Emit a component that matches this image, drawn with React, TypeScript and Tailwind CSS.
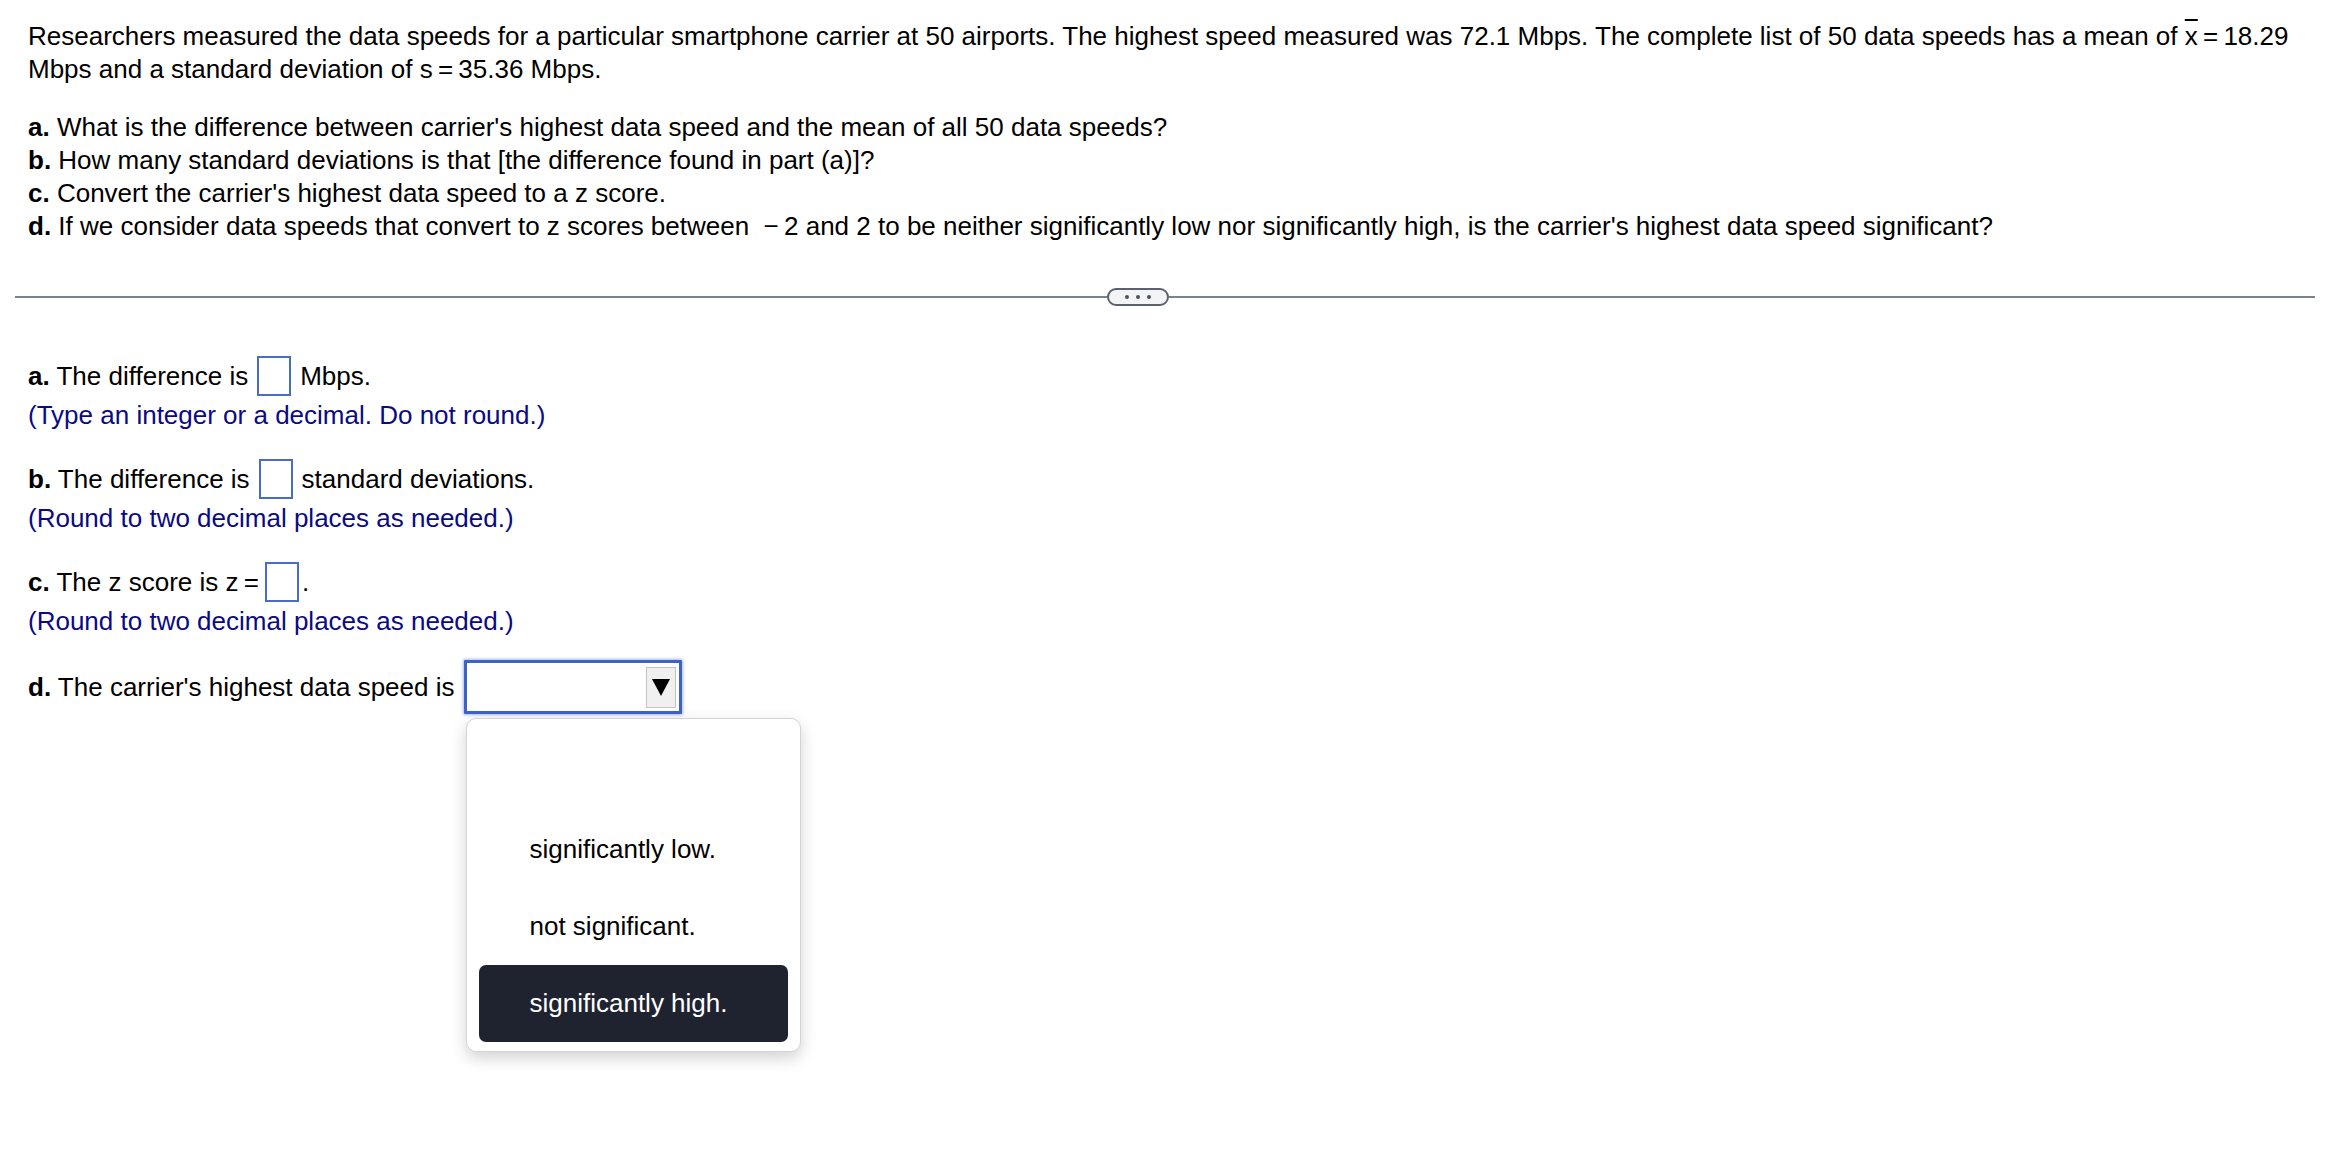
import { useState } from "react";

const options = ["", "significantly low.", "not significant.", "significantly high."];

function AnswerBox() {
  return <span className="inline-block h-[40px] w-[34px] border-2 border-[#4a6cc8] bg-white" />;
}

export default function App() {
  const [active] = useState(3);

  return (
    <div className="min-h-[1174px] bg-white font-['Liberation_Sans',Arial,sans-serif] text-[26px] text-black">
      {/* question text */}
      <div className="pl-[28px] pr-[10px] pt-[20px]">
        <p className="leading-[33px]">
          Researchers measured the data speeds for a particular smartphone carrier at 50 airports. The highest speed
          measured was 72.1 Mbps. The complete list of 50 data speeds has a mean of{" "}
          <span className="overline">x</span>
          {"\u2009=\u200918.29"}
          <br />
          Mbps and a standard deviation of s{"\u2009=\u2009"}35.36 Mbps.
        </p>
        <div className="mt-[25px] leading-[33px]">
          <p>
            <b>a.</b> What is the difference between carrier's highest data speed and the mean of all 50 data speeds?
          </p>
          <p>
            <b>b.</b> How many standard deviations is that [the difference found in part (a)]?
          </p>
          <p>
            <b>c.</b> Convert the carrier's highest data speed to a z score.
          </p>
          <p>
            <b>d.</b> If we consider data speeds that convert to z scores between {"\u00a0\u2212\u20092"} and 2 to be
            neither significantly low nor significantly high, is the carrier's highest data speed significant?
          </p>
        </div>
      </div>

      {/* divider */}
      <div className="mt-[45px] flex items-center pl-[15px] pr-[17px]">
        <div className="h-[2px] w-[1092px] bg-[#7b828e]" />
        <button className="flex h-[18px] w-[62px] items-center justify-center gap-[7px] rounded-full border-2 border-[#5b626e] bg-[#f3f4f6]">
          <span className="h-[4px] w-[4px] rounded-full bg-[#4b5260]" />
          <span className="h-[4px] w-[4px] rounded-full bg-[#4b5260]" />
          <span className="h-[4px] w-[4px] rounded-full bg-[#4b5260]" />
        </button>
        <div className="h-[2px] flex-1 bg-[#7b828e]" />
      </div>

      {/* answers */}
      <div className="mt-[50px] pl-[28px]">
        <div className="flex h-[40px] items-center">
          <span>
            <b>a.</b> The difference is
          </span>
          <span className="ml-[9px] mr-[9px] flex">
            <AnswerBox />
          </span>
          <span>Mbps.</span>
        </div>
        <p className="leading-[38px] text-[#0a0a84]">(Type an integer or a decimal. Do not round.)</p>

        <div className="mt-[25px] flex h-[40px] items-center">
          <span>
            <b>b.</b> The difference is
          </span>
          <span className="ml-[9px] mr-[9px] flex">
            <AnswerBox />
          </span>
          <span>standard deviations.</span>
        </div>
        <p className="leading-[38px] text-[#0a0a84]">(Round to two decimal places as needed.)</p>

        <div className="mt-[25px] flex h-[40px] items-center">
          <span>
            <b>c.</b> The z score is z{"\u2009="}
          </span>
          <span className="ml-[6px] mr-[3px] flex">
            <AnswerBox />
          </span>
          <span>.</span>
        </div>
        <p className="leading-[38px] text-[#0a0a84]">(Round to two decimal places as needed.)</p>

        <div className="mt-[20px] flex items-start">
          <span className="mt-[8px]">
            <b>d.</b> The carrier's highest data speed is
          </span>
          <div className="relative ml-[10px]">
            <div className="flex h-[54px] w-[218px] items-center justify-end rounded-[1px] border-[3px] border-[#3d63c9] bg-white pr-[3px] shadow-[0_0_3px_1px_rgba(61,99,201,0.45)]">
              <span className="flex h-[41px] w-[30px] items-center justify-center border border-[#c4c4c4] bg-[#f0f0f0]">
                <svg width="18" height="17" viewBox="0 0 18 17">
                  <path d="M0 0 H18 L9 17 Z" fill="#000" />
                </svg>
              </span>
            </div>
            <div className="absolute left-[2px] top-[58px] w-[335px] rounded-[10px] border border-[#d4d4d4] bg-white px-[12px] pb-[9px] pt-[15px] shadow-[0_6px_16px_rgba(0,0,0,0.18)]">
              {options.map((o, i) => (
                <div
                  key={i}
                  className={
                    i === active
                      ? "flex h-[77px] items-center rounded-[7px] bg-[#1f2330] pl-[50px] text-white"
                      : "flex h-[77px] items-center pl-[50px] text-black"
                  }
                >
                  {o}
                </div>
              ))}
            </div>
          </div>
        </div>
      </div>
    </div>
  );
}
